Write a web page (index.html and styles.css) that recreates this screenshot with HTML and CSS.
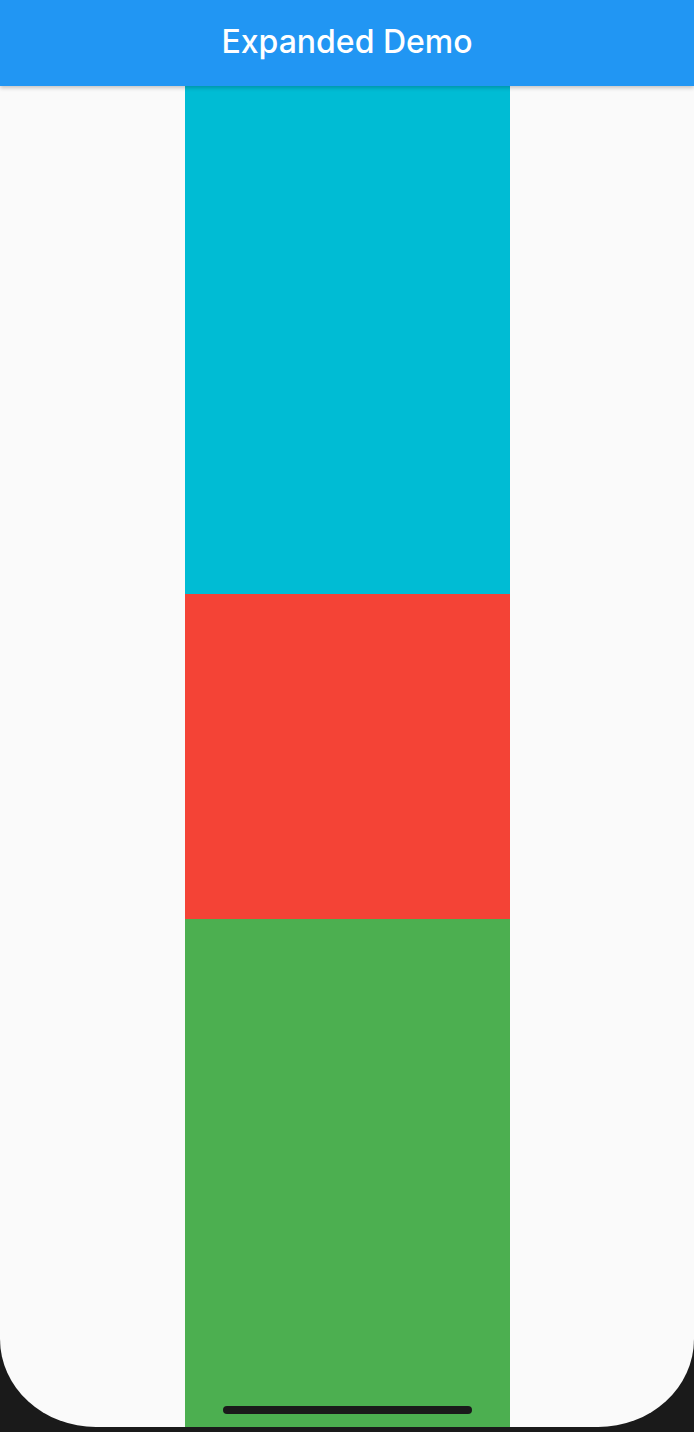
FILE: index.html
```html
<!DOCTYPE html>
<html>
<head>
<meta charset="utf-8">
<link rel="stylesheet" href="styles.css">
</head>
<body>
<div class="screen">
  <header class="appbar"><h1 class="title">Expanded Demo</h1></header>
  <main class="content">
    <div class="column">
      <div class="block cyan"></div>
      <div class="block red"></div>
      <div class="block green"></div>
    </div>
  </main>
  <div class="home-indicator"></div>
</div>
</body>
</html>
```
FILE: styles.css
```css
html, body {
  margin: 0;
  padding: 0;
  background: #1a1a1a;
}
.screen {
  position: relative;
  width: 694px;
  height: 1427px;
  background: #fafafa;
  border-radius: 0 0 96px 96px / 0 0 88px 88px;
  overflow: hidden;
  display: flex;
  flex-direction: column;
}
.appbar {
  position: relative;
  z-index: 2;
  height: 86px;
  flex: 0 0 86px;
  box-sizing: border-box;
  padding-bottom: 4px;
  background: #2196f3;
  display: flex;
  align-items: center;
  justify-content: center;
  box-shadow: 0 2px 4px rgba(0,0,0,0.22);
}
.title {
  margin: 0;
  font-family: Inter, Roboto, sans-serif;
  font-weight: 500;
  font-size: 32px;
  color: #ffffff;
  letter-spacing: 0;
}
.content {
  flex: 1 1 auto;
  display: flex;
  justify-content: center;
}
.column {
  width: 325px;
  display: flex;
  flex-direction: column;
}
.block { flex: 0 0 auto; }
.cyan { height: 508px; background: #00bcd4; }
.red { height: 325px; background: #f44336; }
.green { flex: 1 1 auto; background: #4caf50; }
.home-indicator {
  position: absolute;
  left: 223px;
  top: 1406px;
  width: 249px;
  height: 8px;
  border-radius: 4px;
  background: #1a1a1a;
  z-index: 3;
}
```
